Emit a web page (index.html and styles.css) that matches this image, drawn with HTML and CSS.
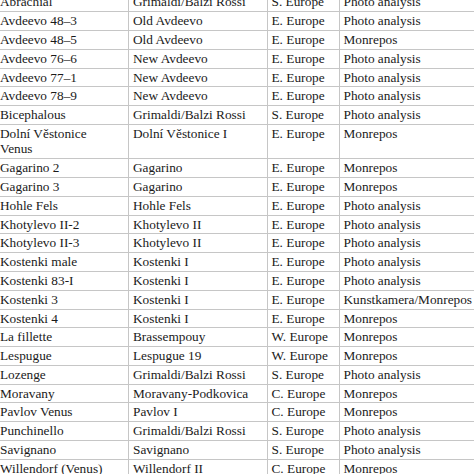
FILE: index.html
```html
<!DOCTYPE html>
<html>
<head>
<meta charset="utf-8">
<link rel="stylesheet" href="styles.css">
</head>
<body>
<table class="data">
<colgroup><col class="c1"><col class="c2"><col class="c3"><col class="c4"></colgroup>
<tbody>
<tr><td>Abrachial</td><td>Grimaldi/Balzi Rossi</td><td>S. Europe</td><td>Photo analysis</td></tr>
<tr><td>Avdeevo 48–3</td><td>Old Avdeevo</td><td>E. Europe</td><td>Photo analysis</td></tr>
<tr><td>Avdeevo 48–5</td><td>Old Avdeevo</td><td>E. Europe</td><td>Monrepos</td></tr>
<tr><td>Avdeevo 76–6</td><td>New Avdeevo</td><td>E. Europe</td><td>Photo analysis</td></tr>
<tr><td>Avdeevo 77–1</td><td>New Avdeevo</td><td>E. Europe</td><td>Photo analysis</td></tr>
<tr><td>Avdeevo 78–9</td><td>New Avdeevo</td><td>E. Europe</td><td>Photo analysis</td></tr>
<tr><td>Bicephalous</td><td>Grimaldi/Balzi Rossi</td><td>S. Europe</td><td>Photo analysis</td></tr>
<tr><td>Dolní Věstonice Venus</td><td>Dolní Věstonice I</td><td>E. Europe</td><td>Monrepos</td></tr>
<tr><td>Gagarino 2</td><td>Gagarino</td><td>E. Europe</td><td>Monrepos</td></tr>
<tr><td>Gagarino 3</td><td>Gagarino</td><td>E. Europe</td><td>Monrepos</td></tr>
<tr><td>Hohle Fels</td><td>Hohle Fels</td><td>E. Europe</td><td>Photo analysis</td></tr>
<tr><td>Khotylevo II-2</td><td>Khotylevo II</td><td>E. Europe</td><td>Photo analysis</td></tr>
<tr><td>Khotylevo II-3</td><td>Khotylevo II</td><td>E. Europe</td><td>Photo analysis</td></tr>
<tr><td>Kostenki male</td><td>Kostenki I</td><td>E. Europe</td><td>Photo analysis</td></tr>
<tr><td>Kostenki 83-I</td><td>Kostenki I</td><td>E. Europe</td><td>Photo analysis</td></tr>
<tr><td>Kostenki 3</td><td>Kostenki I</td><td>E. Europe</td><td>Kunstkamera/Monrepos</td></tr>
<tr><td>Kostenki 4</td><td>Kostenki I</td><td>E. Europe</td><td>Monrepos</td></tr>
<tr><td>La fillette</td><td>Brassempouy</td><td>W. Europe</td><td>Monrepos</td></tr>
<tr><td>Lespugue</td><td>Lespugue 19</td><td>W. Europe</td><td>Monrepos</td></tr>
<tr><td>Lozenge</td><td>Grimaldi/Balzi Rossi</td><td>S. Europe</td><td>Photo analysis</td></tr>
<tr><td>Moravany</td><td>Moravany-Podkovica</td><td>C. Europe</td><td>Monrepos</td></tr>
<tr><td>Pavlov Venus</td><td>Pavlov I</td><td>C. Europe</td><td>Monrepos</td></tr>
<tr><td>Punchinello</td><td>Grimaldi/Balzi Rossi</td><td>S. Europe</td><td>Photo analysis</td></tr>
<tr><td>Savignano</td><td>Savignano</td><td>S. Europe</td><td>Photo analysis</td></tr>
<tr><td>Willendorf (Venus)</td><td>Willendorf II</td><td>C. Europe</td><td>Monrepos</td></tr>
</tbody>
</table>
</body>
</html>
```

FILE: styles.css
```css
html, body {
  margin: 0;
  padding: 0;
  background: #ffffff;
  overflow: hidden;
}

.data {
  border-collapse: separate;
  border-spacing: 0;
  table-layout: fixed;
  width: 484px;
  margin: -6.6px 0 0 -4px;
  font-family: "Liberation Serif", "Times New Roman", serif;
  font-size: 13.3px;
  line-height: 15.6px;
  color: #1a1a1a;
}

.c1 { width: 132px; }
.c2 { width: 138.5px; }
.c3 { width: 72px; }
.c4 { width: 141.5px; }

.data td {
  box-sizing: border-box;
  vertical-align: top;
  padding: 1px 2px 1.2px 4px;
  border-bottom: 1px solid #c6c6c6;
  white-space: normal;
  overflow: hidden;
}

.data td:first-child {
  padding-right: 8px;
}

.data td + td {
  border-left: 1px solid #c6c6c6;
}
```
